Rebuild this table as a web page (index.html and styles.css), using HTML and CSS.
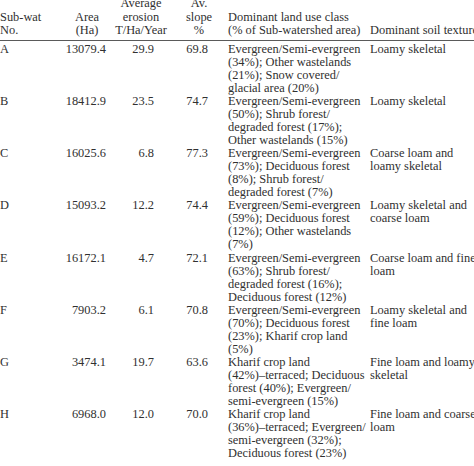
FILE: index.html
```html
<!DOCTYPE html>
<html>
<head>
<meta charset="utf-8">
<link rel="stylesheet" href="styles.css">
</head>
<body>
<table class="data">
  <colgroup>
    <col class="c-id"><col class="c-area"><col class="c-ero"><col class="c-slope"><col class="c-land"><col class="c-soil">
  </colgroup>
  <thead>
    <tr>
      <th class="left">Sub-wat<br>No.</th>
      <th class="mid">Area<br>(Ha)</th>
      <th class="mid">Average<br>erosion<br>T/Ha/Year</th>
      <th class="mid">Av.<br>slope<br>%</th>
      <th class="left">Dominant land use class<br>(% of Sub-watershed area)</th>
      <th class="left nowrap">Dominant soil texture</th>
    </tr>
  </thead>
  <tbody>
    <tr>
      <td>A</td><td class="num n-area">13079.4</td><td class="num n-ero">29.9</td><td class="num n-slope">69.8</td>
      <td>Evergreen/Semi-evergreen<br>(34%); Other wastelands<br>(21%); Snow covered/<br>glacial area (20%)</td>
      <td>Loamy skeletal</td>
    </tr>
    <tr>
      <td>B</td><td class="num n-area">18412.9</td><td class="num n-ero">23.5</td><td class="num n-slope">74.7</td>
      <td>Evergreen/Semi-evergreen<br>(50%); Shrub forest/<br>degraded forest (17%);<br>Other wastelands (15%)</td>
      <td>Loamy skeletal</td>
    </tr>
    <tr>
      <td>C</td><td class="num n-area">16025.6</td><td class="num n-ero">6.8</td><td class="num n-slope">77.3</td>
      <td>Evergreen/Semi-evergreen<br>(73%); Deciduous forest<br>(8%); Shrub forest/<br>degraded forest (7%)</td>
      <td>Coarse loam and<br>loamy skeletal</td>
    </tr>
    <tr>
      <td>D</td><td class="num n-area">15093.2</td><td class="num n-ero">12.2</td><td class="num n-slope">74.4</td>
      <td>Evergreen/Semi-evergreen<br>(59%); Deciduous forest<br>(12%); Other wastelands<br>(7%)</td>
      <td>Loamy skeletal and<br>coarse loam</td>
    </tr>
    <tr>
      <td>E</td><td class="num n-area">16172.1</td><td class="num n-ero">4.7</td><td class="num n-slope">72.1</td>
      <td>Evergreen/Semi-evergreen<br>(63%); Shrub forest/<br>degraded forest (16%);<br>Deciduous forest (12%)</td>
      <td>Coarse loam and fine<br>loam</td>
    </tr>
    <tr>
      <td>F</td><td class="num n-area">7903.2</td><td class="num n-ero">6.1</td><td class="num n-slope">70.8</td>
      <td>Evergreen/Semi-evergreen<br>(70%); Deciduous forest<br>(23%); Kharif crop land<br>(5%)</td>
      <td>Loamy skeletal and<br>fine loam</td>
    </tr>
    <tr>
      <td>G</td><td class="num n-area">3474.1</td><td class="num n-ero">19.7</td><td class="num n-slope">63.6</td>
      <td>Kharif crop land<br>(42%)–terraced; Deciduous<br>forest (40%); Evergreen/<br>semi-evergreen (15%)</td>
      <td>Fine loam and loamy<br>skeletal</td>
    </tr>
    <tr>
      <td>H</td><td class="num n-area">6968.0</td><td class="num n-ero">12.0</td><td class="num n-slope">70.0</td>
      <td>Kharif crop land<br>(36%)–terraced; Evergreen/<br>semi-evergreen (32%);<br>Deciduous forest (23%)</td>
      <td>Fine loam and coarse<br>loam</td>
    </tr>
  </tbody>
</table>
</body>
</html>
```
FILE: styles.css
```css
html, body {
  margin: 0;
  padding: 0;
  background: #ffffff;
  overflow: hidden;
}
body {
  width: 474px;
  height: 466px;
  font-family: "Liberation Serif", "Times New Roman", serif;
  font-size: 12.4px;
  color: #303030;
}
.data {
  border-collapse: collapse;
  table-layout: fixed;
  width: 490px;
  margin-top: -3px;
  margin-left: 0;
}
.c-id { width: 62px; }
.c-area { width: 50px; }
.c-ero { width: 58px; }
.c-slope { width: 58px; }
.c-land { width: 142px; }
.c-soil { width: 120px; }
th, td {
  padding: 0;
  vertical-align: top;
}
th {
  font-weight: normal;
  line-height: 13.5px;
  vertical-align: bottom;
  padding-bottom: 2px;
  border-bottom: 1px solid #5a5a5a;
}
td {
  line-height: 13.07px;
  white-space: nowrap;
}
tbody tr:first-child td {
  padding-top: 2px;
}
.left { text-align: left; }
.mid { text-align: center; }
.nowrap { white-space: nowrap; }
.num { text-align: right; }
.n-area { padding-right: 6px; }
.n-ero { padding-right: 16px; }
.n-slope { padding-right: 20px; }
```
